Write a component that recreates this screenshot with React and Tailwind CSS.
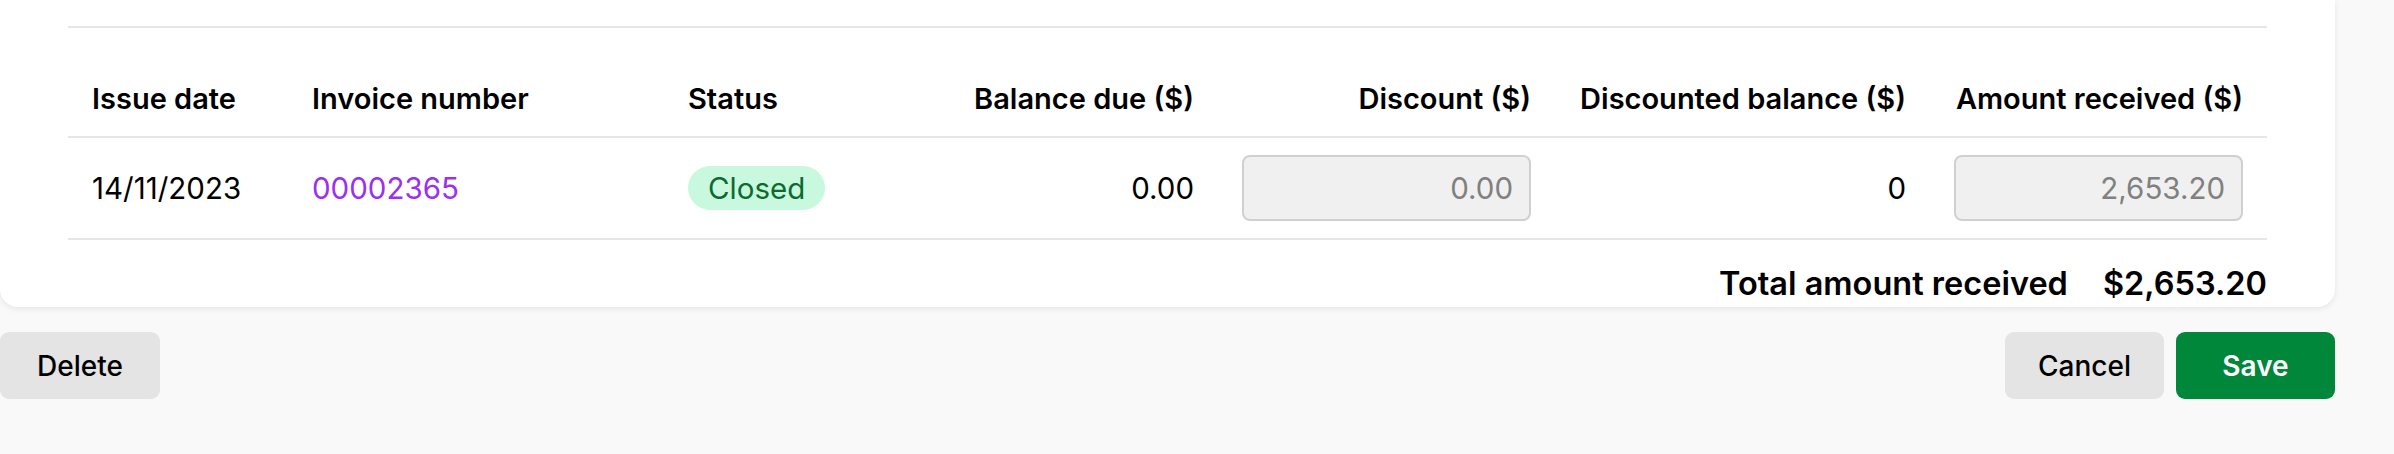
import React from "react";

const cols = "grid grid-cols-[220px_376px_200px_354px_337px_375px_337px] items-center";

const App = () => {
  const rows = [
    {
      issueDate: "14/11/2023",
      invoiceNumber: "00002365",
      status: "Closed",
      balanceDue: "0.00",
      discount: "0.00",
      discountedBalance: "0",
      amountReceived: "2,653.20",
    },
  ];

  return (
    <div className="min-h-[454px] bg-[#f9f9f9] pr-[59px] font-['Inter',sans-serif] text-black">
      <div className="rounded-b-[18px] bg-white px-[68px] pt-[26px] pb-[5px] shadow-[0_2px_6px_rgba(0,0,0,0.08)]">
        <div className="border-t-2 border-[#e6e6e6]">
          <div className={`${cols} h-[110px] border-b-2 border-[#e6e6e6] pt-[34px] text-[29px] font-semibold`}>
            <div className="px-[24px]">Issue date</div>
            <div className="px-[24px]">Invoice number</div>
            <div className="px-[24px]">Status</div>
            <div className="px-[24px] text-right">Balance due ($)</div>
            <div className="px-[24px] text-right">Discount ($)</div>
            <div className="px-[24px] text-right">Discounted balance ($)</div>
            <div className="px-[24px] text-right">Amount received ($)</div>
          </div>

          {rows.map((row) => (
            <div
              key={row.invoiceNumber}
              className={`${cols} h-[102px] border-b-2 border-[#e6e6e6] text-[29.5px]`}
            >
              <div className="px-[24px]">{row.issueDate}</div>
              <div className="px-[24px] text-[#9b30f0]">{row.invoiceNumber}</div>
              <div className="px-[24px]">
                <span className="inline-flex h-[44px] items-center rounded-full bg-[#c8f9de] px-[20px] text-[#0c6a30]">
                  {row.status}
                </span>
              </div>
              <div className="px-[24px] text-right">{row.balanceDue}</div>
              <div className="px-[24px]">
                <input
                  readOnly
                  value={row.discount}
                  className="h-[66px] w-full rounded-[8px] border-2 border-[#d0d0d0] bg-[#f0f0f0] px-[16px] text-right text-[29.5px] text-[#808080] outline-none"
                />
              </div>
              <div className="px-[24px] text-right">{row.discountedBalance}</div>
              <div className="px-[24px]">
                <input
                  readOnly
                  value={row.amountReceived}
                  className="h-[66px] w-full rounded-[8px] border-2 border-[#d0d0d0] bg-[#f0f0f0] px-[16px] text-right text-[29.5px] text-[#808080] outline-none"
                />
              </div>
            </div>
          ))}
        </div>

        <div className="flex justify-end gap-[35px] pt-[26px] text-[32.5px] leading-[36px] font-semibold">
          <span>Total amount received</span>
          <span>$2,653.20</span>
        </div>
      </div>

      <div className="mt-[25px] flex items-center justify-between">
        <button className="h-[67px] w-[160px] rounded-[9px] bg-[#e4e4e4] text-[28px] font-medium">
          Delete
        </button>
        <div className="flex gap-[12px]">
          <button className="h-[67px] w-[159px] rounded-[9px] bg-[#e4e4e4] text-[28px] font-medium">
            Cancel
          </button>
          <button className="h-[67px] w-[159px] rounded-[9px] bg-[#00873a] text-[28px] font-semibold text-white">
            Save
          </button>
        </div>
      </div>
    </div>
  );
};

export default App;
